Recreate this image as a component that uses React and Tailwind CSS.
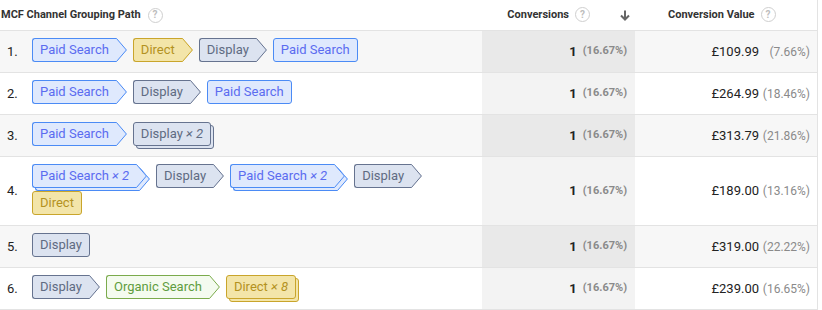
const KINDS = {
  paid:    { label: 'Paid Search',    box: 'bg-[#dfe9fd] border-[#4b8bf5]', text: 'text-[#5b6cf0]', fill: '#dfe9fd', stroke: '#4b8bf5' },
  direct:  { label: 'Direct',         box: 'bg-[#f3e5a9] border-[#c9a52b]', text: 'text-[#b3921f]', fill: '#f3e5a9', stroke: '#c9a52b' },
  display: { label: 'Display',        box: 'bg-[#dce3f0] border-[#66738f]', text: 'text-[#5f6b82]', fill: '#dce3f0', stroke: '#66738f' },
  organic: { label: 'Organic Search', box: 'bg-[#f4fbef] border-[#7bab4c]', text: 'text-[#5f9d3e]', fill: '#f4fbef', stroke: '#7bab4c' },
}

const ROWS = [
  { path: [['paid'], ['direct'], ['display'], ['paid']], pct: '(16.67%)', value: '£109.99', share: '(7.66%)' },
  { path: [['paid'], ['display'], ['paid']], pct: '(16.67%)', value: '£264.99', share: '(18.46%)' },
  { path: [['paid'], ['display', 2]], pct: '(16.67%)', value: '£313.79', share: '(21.86%)' },
  { path: [['paid', 2], ['display'], ['paid', 2], ['display'], ['direct']], pct: '(16.67%)', value: '£189.00', share: '(13.16%)' },
  { path: [['display']], pct: '(16.67%)', value: '£319.00', share: '(22.22%)' },
  { path: [['display'], ['organic'], ['direct', 8]], pct: '(16.67%)', value: '£239.00', share: '(16.65%)' },
]

function Arrow({ k }) {
  return (
    <svg width="11" height="24" viewBox="0 0 11 24" className="block shrink-0">
      <polygon points="0,0 0.5,0 10.8,12 0.5,24 0,24" fill={k.fill} />
      <polyline points="0,0.5 0.5,0.5 10.4,12 0.5,23.5 0,23.5" fill="none" stroke={k.stroke} strokeWidth="1" />
    </svg>
  )
}

function Chip({ kind, count = 1, arrow }) {
  const k = KINDS[kind]
  const shape = arrow ? 'rounded-l-[3px] border-r-0' : 'rounded-[3px]'
  return (
    <div className={`relative pb-[3px] ${count > 1 ? 'pr-[3px]' : ''}`}>
      {/* stacked copy behind the chip for repeated touch points */}
      {count > 1 && (
        <div className="absolute bottom-0 left-[3px] right-0 top-[3px] flex">
          <div className={`flex-1 border ${k.box} ${shape}`} />
          {arrow && <Arrow k={k} />}
        </div>
      )}
      <div className="relative flex h-[24px]">
        <div className={`flex items-center whitespace-nowrap border px-[7px] text-[13px] ${k.box} ${k.text} ${shape}`}>
          {k.label}
          {count > 1 && <span className="italic">&nbsp;× {count}</span>}
        </div>
        {arrow && <Arrow k={k} />}
      </div>
    </div>
  )
}

function Help() {
  return (
    <span className="inline-flex h-[15px] w-[15px] items-center justify-center rounded-full border border-[#cfcfcf] text-[10px] leading-none text-[#bdbdbd]">
      ?
    </span>
  )
}

export default function App() {
  return (
    <div className="w-[822px] bg-white font-['Roboto',sans-serif] text-[#222]">
      <div className="w-[818px] border-r border-[#e3e3e3]">
        <div className="flex h-[31px] border-b border-[#e3e3e3] text-[11px] font-bold text-[#333]">
          <div className="flex w-[482px] items-center gap-[7px] pl-[1px]">
            <span>MCF Channel Grouping Path</span>
            <Help />
          </div>
          <div className="flex w-[153px] items-center justify-end pr-[3px]">
            <span>Conversions</span>
            <span className="ml-[6px]"><Help /></span>
            <svg width="12" height="12" viewBox="0 0 12 12" className="ml-[29px] mr-[1px]">
              <path d="M6 1.5v8.5M2 6.5l4 4 4-4" fill="none" stroke="#666" strokeWidth="2" />
            </svg>
          </div>
          <div className="flex w-[182px] items-center pl-[33px]">
            <span>Conversion Value</span>
            <span className="ml-[6px]"><Help /></span>
          </div>
        </div>

        {ROWS.map((row, i) => {
          const odd = i % 2 === 0
          return (
            <div key={i} className={`flex border-b border-[#e3e3e3] ${odd ? 'bg-[#f7f7f7]' : 'bg-white'}`}>
              <div className="flex w-[482px] items-center">
                <div className="w-[32px] shrink-0 pl-[7px] text-[13px]">{i + 1}.</div>
                <div className="flex flex-1 flex-wrap gap-x-[6px] py-[7px] pr-[10px]">
                  {row.path.map(([kind, count], j) => (
                    <Chip key={j} kind={kind} count={count} arrow={j < row.path.length - 1} />
                  ))}
                </div>
              </div>
              <div className={`flex w-[153px] items-center justify-end pr-[8px] ${odd ? 'bg-[#e9e9e9]' : 'bg-[#f3f3f3]'}`}>
                <span className="text-[13px] font-bold">1</span>
                <span className="ml-[6px] text-[11px] font-bold text-[#8a8a8a]">{row.pct}</span>
              </div>
              <div className="flex w-[182px] items-center justify-end pr-[7px]">
                <span className="text-[13px]">{row.value}</span>
                <span className="w-[51px] text-right text-[12px] text-[#8a8a8a]">{row.share}</span>
              </div>
            </div>
          )
        })}
      </div>
    </div>
  )
}
